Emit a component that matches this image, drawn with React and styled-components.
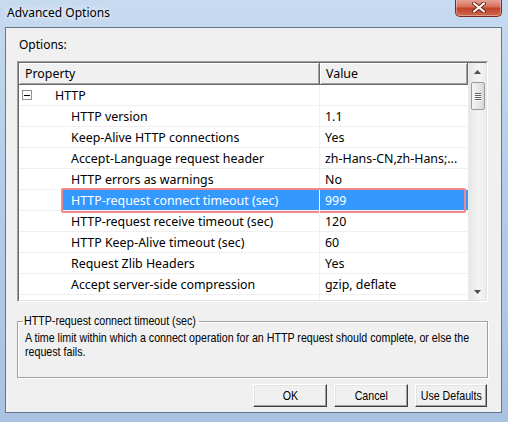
import React from 'react';
import styled, { createGlobalStyle } from 'styled-components';

const GlobalStyle = createGlobalStyle`
  html, body { margin: 0; padding: 0; }
  body {
    width: 508px;
    height: 422px;
    overflow: hidden;
    background: #bcd3ec;
  }
`;

const uiFont = `"Noto Sans", "Liberation Sans", Arial, sans-serif`;
const classicFont = `"Liberation Sans", Arial, sans-serif`;

const properties = [
  { name: 'HTTP version', value: '1.1' },
  { name: 'Keep-Alive HTTP connections', value: 'Yes' },
  { name: 'Accept-Language request header', value: 'zh-Hans-CN,zh-Hans;...' },
  { name: 'HTTP errors as warnings', value: 'No' },
  { name: 'HTTP-request connect timeout (sec)', value: '999', selected: true },
  { name: 'HTTP-request receive timeout (sec)', value: '120' },
  { name: 'HTTP Keep-Alive timeout (sec)', value: '60' },
  { name: 'Request Zlib Headers', value: 'Yes' },
  { name: 'Accept server-side compression', value: 'gzip, deflate' },
  { name: 'Enforce safe handling of redirects', value: '1' },
];

const Window = styled.div`
  width: 508px;
  height: 422px;
  box-sizing: border-box;
  padding: 0 6px 9px 5px;
  display: flex;
  flex-direction: column;
  background: linear-gradient(180deg, #c6daf0 0%, #b6cde9 40%, #a9c2e2 100%);
  font-family: ${uiFont};
  overflow: hidden;
`;

const TitleBar = styled.div`
  height: 27px;
  display: flex;
  align-items: flex-start;
  justify-content: space-between;
`;

const Title = styled.div`
  padding-left: 2px;
  line-height: 26px;
  font-size: 12px;
  color: #000;
  text-shadow: 0 0 6px rgba(255, 255, 255, 0.95), 0 0 10px rgba(255, 255, 255, 0.8);
`;

const CloseButton = styled.div`
  width: 47px;
  height: 18px;
  box-sizing: border-box;
  margin-top: -1px;
  display: flex;
  align-items: center;
  justify-content: center;
  border: 1px solid #7d2a1e;
  border-top: none;
  border-radius: 0 0 5px 5px;
  background: linear-gradient(180deg, #e9a99c 0%, #d7705c 45%, #c2412a 55%, #cf6a4f 100%);
  box-shadow: inset 0 0 0 1px rgba(255, 255, 255, 0.35);
`;

const Client = styled.div`
  flex: 1;
  min-width: 0;
  display: flex;
  flex-direction: column;
  padding: 0 13px 5px 11px;
  background: #f0f0f0;
  border: 1px solid #65758a;
`;

const Label = styled.div`
  margin: 9px 0 8px 2px;
  font-size: 12px;
  line-height: 16px;
  color: #000;
`;

const ListFrame = styled.div`
  height: 241px;
  box-sizing: border-box;
  border: 1px solid;
  border-color: #a0a0a0 #ffffff #ffffff #a0a0a0;
`;

const ListInner = styled.div`
  height: 100%;
  box-sizing: border-box;
  display: flex;
  border: 1px solid;
  border-color: #696969 #e3e3e3 #e3e3e3 #696969;
  background: #fff;
  overflow: hidden;
`;

const Grid = styled.div`
  flex: 1;
  display: flex;
  flex-direction: column;
  overflow: hidden;
  font-size: 12.4px;
  color: #000;
`;

const HeaderRow = styled.div`
  display: flex;
  flex: none;
  height: 22px;
`;

const HeaderCell = styled.div`
  box-sizing: border-box;
  width: ${p => (p.$w ? `${p.$w}px` : 'auto')};
  flex: ${p => (p.$w ? 'none' : '1')};
  display: flex;
  align-items: center;
  padding-left: 6px;
  background: #f0f0f0;
  border-right: 1px solid #696969;
  border-bottom: 1px solid #696969;
  box-shadow: inset 1px 1px 0 #ffffff, inset -1px -1px 0 #a0a0a0;
`;

const Row = styled.div`
  position: relative;
  flex: none;
  display: flex;
  height: 21px;
  box-sizing: border-box;
  border-bottom: 1px solid #f0f0f0;
  white-space: nowrap;
`;

const NameCell = styled.div`
  width: 301px;
  flex: none;
  box-sizing: border-box;
  display: flex;
  align-items: stretch;
  padding-left: ${p => p.$indent}px;
  border-right: 1px solid ${p => (p.$selected ? '#ffffff' : '#f0f0f0')};
`;

const NameText = styled.div`
  flex: 1;
  display: flex;
  align-items: center;
  padding-left: 8px;
  overflow: hidden;
  background: ${p => (p.$selected ? '#3399ff' : 'transparent')};
  color: ${p => (p.$selected ? '#fff' : '#000')};
`;

const ValueCell = styled.div`
  flex: 1;
  display: flex;
  align-items: center;
  padding-left: 5px;
  overflow: hidden;
  background: ${p => (p.$selected ? '#3399ff' : 'transparent')};
  color: ${p => (p.$selected ? '#fff' : '#000')};
`;

const Toggle = styled.span`
  width: 10px;
  height: 10px;
  box-sizing: border-box;
  margin: 0 23px 0 3px;
  align-self: center;
  border: 1px solid #919191;
  display: flex;
  align-items: center;
  justify-content: center;
  &::after {
    content: '';
    width: 6px;
    height: 1px;
    background: #000;
  }
`;

const CategoryText = styled.div`
  display: flex;
  align-items: center;
`;

const Highlight = styled.div`
  position: absolute;
  left: 42px;
  right: 2px;
  top: -2px;
  height: 25px;
  box-sizing: border-box;
  border: 2px solid #f08a8a;
  border-radius: 2px;
  pointer-events: none;
`;

const Scrollbar = styled.div`
  width: 17px;
  flex: none;
  display: flex;
  flex-direction: column;
  align-items: center;
  background: linear-gradient(90deg, #e6e6e6 0%, #f4f4f4 60%, #ededed 100%);
  border-left: 1px solid #eaeaea;
`;

const ArrowButton = styled.div`
  width: 17px;
  height: 17px;
  flex: none;
  display: flex;
  align-items: center;
  justify-content: center;
`;

const Thumb = styled.div`
  width: 14px;
  height: 28px;
  margin-top: 2px;
  box-sizing: border-box;
  border: 1px solid #9a9a9a;
  border-radius: 2px;
  background: linear-gradient(90deg, #f4f4f4 0%, #e8e8e8 50%, #d6d6d6 100%);
  display: flex;
  flex-direction: column;
  align-items: center;
  justify-content: center;
  gap: 1px;
`;

const Grip = styled.span`
  width: 6px;
  height: 1px;
  background: #5b5b5b;
  box-shadow: 0 1px 0 #ffffff;
`;

const Track = styled.div`
  flex: 1;
`;

/* narrow classic dialog font: Arial squeezed to Arial Narrow proportions */
const Narrow = styled.span`
  display: inline-block;
  white-space: nowrap;
  transform: scaleX(0.82);
  transform-origin: ${p => (p.$center ? 'center' : 'left')} center;
`;

const GroupBox = styled.fieldset`
  margin: 12px 0 0 0;
  min-width: 0;
  height: 64px;
  box-sizing: border-box;
  padding: 0 8px 0 7px;
  border: 1px solid #a0a0a0;
  box-shadow: 1px 1px 0 #ffffff, inset 1px 1px 0 #ffffff;
  font-family: ${classicFont};
  font-size: 13px;
  color: #000;
  overflow: hidden;
`;

const Legend = styled.legend`
  width: 174px;
  margin-left: -2px;
  padding: 0 1px;
  line-height: 14px;
  white-space: nowrap;
`;

const Description = styled.div`
  margin-top: 3px;
  line-height: 14px;
`;

const Line = styled.div`
  height: 14px;
  width: 100%;
`;

const ButtonRow = styled.div`
  margin-top: 6px;
  display: flex;
  justify-content: flex-end;
  gap: 7px;
  padding-right: 1px;
`;

const Button = styled.button`
  width: ${p => p.$w}px;
  height: 23px;
  padding: 0;
  box-sizing: border-box;
  display: flex;
  align-items: center;
  justify-content: center;
  background: #f0f0f0;
  border: 1px solid;
  border-color: #ffffff #404040 #404040 #ffffff;
  box-shadow: inset -1px -1px 0 #a0a0a0, inset 1px 1px 0 #e3e3e3;
  font-family: ${classicFont};
  font-size: 13px;
  color: #000;
`;

const Arrow = ({ down }) => (
  <svg width="7" height="4" viewBox="0 0 7 4">
    <path d={down ? 'M0 0h7L3.5 4z' : 'M3.5 0L7 4H0z'} fill="#4d4d4d" />
  </svg>
);

const App = () => {
  return (
    <>
      <GlobalStyle />
      <Window>
        <TitleBar>
          <Title>Advanced Options</Title>
          <CloseButton>
            <svg width="14" height="11" viewBox="0 0 14 11">
              <path d="M2 1.5L12 9.5M12 1.5L2 9.5" stroke="#6e2418" strokeWidth="4" strokeLinecap="round" />
              <path d="M2 1.5L12 9.5M12 1.5L2 9.5" stroke="#ffffff" strokeWidth="2.2" strokeLinecap="round" />
            </svg>
          </CloseButton>
        </TitleBar>
        <Client>
          <Label>Options:</Label>
          <ListFrame>
            <ListInner>
              <Grid>
                <HeaderRow>
                  <HeaderCell $w={301}>Property</HeaderCell>
                  <HeaderCell>Value</HeaderCell>
                </HeaderRow>
                <Row>
                  <NameCell $indent={0}>
                    <Toggle />
                    <CategoryText>HTTP</CategoryText>
                  </NameCell>
                  <ValueCell />
                </Row>
                {properties.map(p => (
                  <Row key={p.name}>
                    <NameCell $indent={44} $selected={p.selected}>
                      <NameText $selected={p.selected}>{p.name}</NameText>
                    </NameCell>
                    <ValueCell $selected={p.selected}>{p.value}</ValueCell>
                    {p.selected && <Highlight />}
                  </Row>
                ))}
              </Grid>
              <Scrollbar>
                <ArrowButton><Arrow /></ArrowButton>
                <Thumb>
                  <Grip />
                  <Grip />
                  <Grip />
                  <Grip />
                </Thumb>
                <Track />
                <ArrowButton><Arrow down /></ArrowButton>
              </Scrollbar>
            </ListInner>
          </ListFrame>
          <GroupBox>
            <Legend><Narrow>HTTP-request connect timeout (sec)</Narrow></Legend>
            <Description>
              <Line><Narrow>A time limit within which a connect operation for an HTTP request should complete, or else the</Narrow></Line>
              <Line><Narrow>request fails.</Narrow></Line>
            </Description>
          </GroupBox>
          <ButtonRow>
            <Button $w={74}><Narrow $center>OK</Narrow></Button>
            <Button $w={74}><Narrow $center>Cancel</Narrow></Button>
            <Button $w={72}><Narrow $center>Use Defaults</Narrow></Button>
          </ButtonRow>
        </Client>
      </Window>
    </>
  );
};

export default App;
